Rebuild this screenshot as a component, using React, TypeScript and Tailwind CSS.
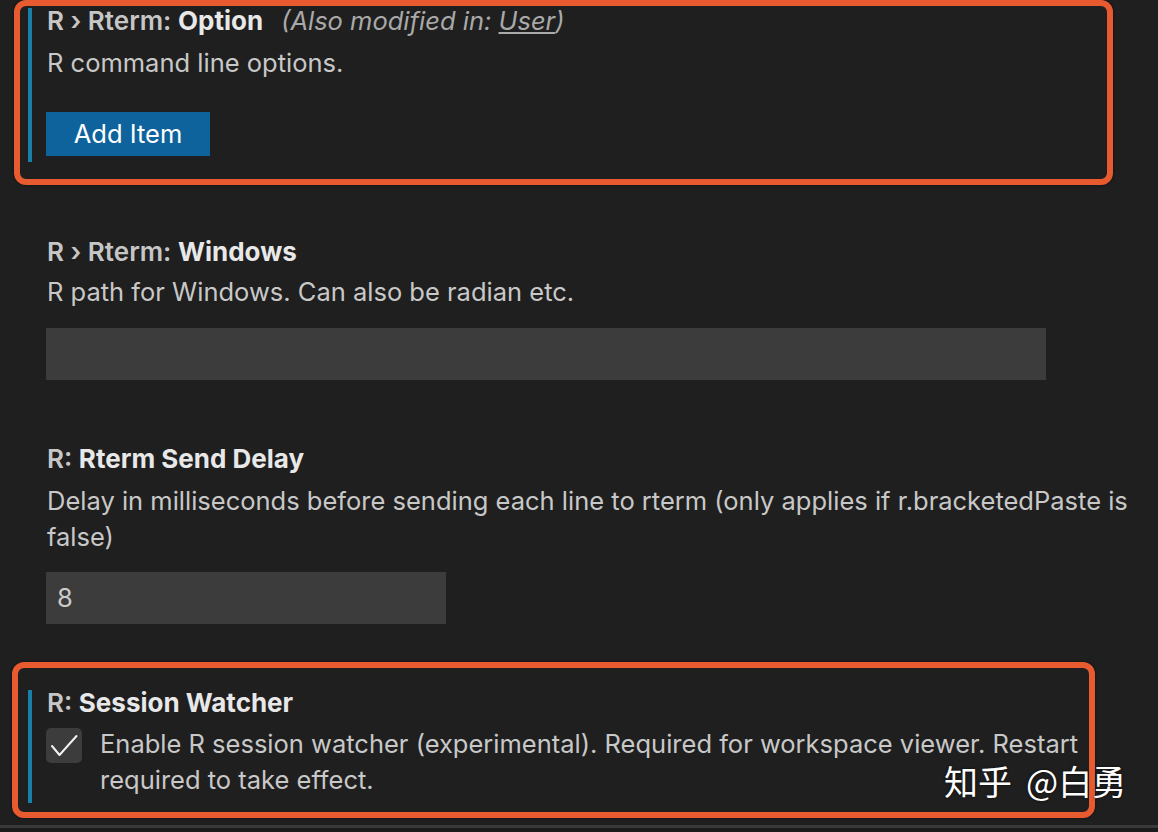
import React from "react";

const font = { fontFamily: 'Inter, "Noto Sans", sans-serif' };

function Title({ cat, label }: { cat: string; label: string }) {
  return (
    <div className="text-[26px] leading-[36px] whitespace-nowrap">
      <span className="font-semibold text-[#c6c6c6]">{cat}</span>
      <span className="font-bold text-[#e8e8e8]">{label}</span>
    </div>
  );
}

export default function App() {
  return (
    <div
      className="relative w-[1158px] h-[832px] overflow-hidden bg-[#1f1f1f] flex flex-col pt-[3px]"
      style={font}
    >
      {/* Item 1 */}
      <div className="flex flex-row pl-[28px] w-[1140px]">
        <div className="w-[4px] mt-[5px] bg-[#1880a8] shrink-0" />
        <div className="pl-[15px] pb-[6px] flex flex-col items-start flex-1">
          <div className="text-[26px] leading-[36px] whitespace-nowrap flex items-baseline">
            <span className="font-semibold text-[#c6c6c6]">R › Rterm:&nbsp;</span>
            <span className="font-bold text-[#e8e8e8]">Option</span>
            <span className="italic text-[#a9a9a9] ml-[18px] text-[25.5px]">
              (Also modified in: <span className="underline">User</span>)
            </span>
          </div>
          <div className="mt-[6px] text-[25.5px] leading-[36px] text-[#c8c8c8]">R command line options.</div>
          <button className="mt-[31px] -ml-px w-[164px] h-[44px] bg-[#0e639c] text-white text-[25.5px] leading-[44px] text-center">
            Add Item
          </button>
        </div>
      </div>

      {/* Item 2 */}
      <div className="mt-[72px] pl-[47px] w-[1140px] flex flex-col items-start">
        <Title cat="R › Rterm: " label="Windows" />
        <div className="mt-[4px] text-[25.5px] leading-[36px] text-[#c8c8c8]">
          R path for Windows. Can also be radian etc.
        </div>
        <div className="mt-[18px] -ml-px w-[1000px] h-[52px] bg-[#3c3c3c]" />
      </div>

      {/* Item 3 */}
      <div className="mt-[61px] pl-[47px] w-[1140px] flex flex-col items-start">
        <Title cat="R: " label="Rterm Send Delay" />
        <div className="mt-[6px] text-[25.5px] leading-[36px] text-[#c8c8c8]">
          Delay in milliseconds before sending each line to rterm (only applies if r.bracketedPaste is false)
        </div>
        <div className="mt-[17px] -ml-px w-[400px] h-[52px] bg-[#3c3c3c] flex items-center pl-[11px] text-[25.5px] text-[#cccccc]">
          8
        </div>
      </div>

      {/* Item 4 */}
      <div className="mt-[61px] flex flex-row pl-[28px] w-[1140px]">
        <div className="w-[4px] mt-[5px] bg-[#1880a8] shrink-0" />
        <div className="pl-[15px] pb-[5px] flex flex-col flex-1">
          <Title cat="R: " label="Session Watcher" />
          <div className="mt-[5px] flex flex-row items-start">
            <div className="mt-[2px] -ml-px w-[36px] h-[35px] shrink-0 rounded-[5px] bg-[#3c3c3c] flex items-center justify-center">
              <svg width="36" height="35" viewBox="0 0 36 35" fill="none">
                <polyline points="6,18 13.5,27 30.5,8" stroke="#f2f2f2" strokeWidth="2" strokeLinecap="round" strokeLinejoin="round" />
              </svg>
            </div>
            <div className="ml-[18px] text-[25.5px] leading-[36px] text-[#c8c8c8]">
              Enable R session watcher (experimental). Required for workspace viewer. Restart required to take effect.
            </div>
          </div>
        </div>
      </div>

      <div className="mt-[22px] h-[3px] bg-[#3a3a3a]" />
      <div className="flex-1 bg-[#1b1b1b]" />

      {/* annotation highlight boxes */}
      <div className="absolute left-[14px] top-0 w-[1099px] h-[185px] border-[6px] border-[#e85a2f] rounded-[12px] shadow-[0_0_3px_rgba(0,0,0,0.6)]" />
      <div className="absolute left-[12px] top-[662px] w-[1083px] h-[156px] border-[6px] border-[#e85a2f] rounded-[12px] shadow-[0_0_3px_rgba(0,0,0,0.6)]" />

      {/* watermark */}
      <div
        className="absolute left-[944px] top-[757px] text-[34px] leading-[48px] text-white whitespace-nowrap [text-shadow:0_0_3px_rgba(0,0,0,0.7)]"
        style={{ fontFamily: '"Noto Sans CJK SC", "Noto Sans", sans-serif' }}
      >
        知乎<span className="inline-block w-[14px]" />@白勇
      </div>
    </div>
  );
}
